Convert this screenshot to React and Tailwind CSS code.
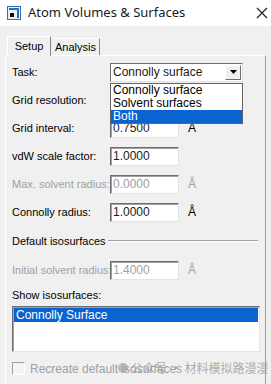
import React from 'react';

const font = { fontFamily: '"Liberation Sans", Arial, sans-serif' };

function Field({ label, value, unit, disabled }) {
  return (
    <div className="flex items-center h-[28px]">
      <div className={`w-[98px] text-[11px] whitespace-nowrap ${disabled ? 'text-[#a0a0a0]' : 'text-black'}`}>{label}</div>
      <div className="w-[69px] h-[19px] bg-white border border-t-[#6d6d6d] border-l-[#6d6d6d] border-b-[#e3e3e3] border-r-[#e3e3e3] shadow-[inset_1px_1px_0_#a0a0a0] flex items-center pl-[2px]">
        <span className={`text-[12px] ${disabled ? 'text-[#a0a0a0]' : 'text-[#1a1a1a]'}`}>{value}</span>
      </div>
      {unit && <span className={`ml-[9px] text-[12px] ${disabled ? 'text-[#a0a0a0]' : 'text-black'}`}>{unit}</span>}
    </div>
  );
}

export default function App() {
  return (
    <div className="w-[271px] h-[384px] bg-[#f0f0f0] overflow-hidden relative" style={font}>
      {/* title bar */}
      <div className="h-[26px] bg-white flex items-center pl-[7px] pr-[3px]">
        <svg width="14" height="14" viewBox="0 0 14 14">
          <rect x="0.5" y="0.5" width="13" height="13" fill="#e8f0f8" stroke="#2f6fb8" />
          <rect x="2" y="2" width="10" height="2" fill="#2f6fb8" />
          <rect x="10" y="2" width="2" height="10" fill="#2f6fb8" />
          <rect x="3" y="7" width="4" height="4" fill="#111" />
        </svg>
        <span className="ml-[7px] text-[13px] text-[#1a1a1a]" style={{ fontFamily: '"Noto Sans", "Liberation Sans", sans-serif' }}>Atom Volumes &amp; Surfaces</span>
        <svg className="ml-auto" width="12" height="12" viewBox="0 0 12 12">
          <path d="M1 1 L11 11 M11 1 L1 11" stroke="#222" strokeWidth="1.2" />
        </svg>
      </div>

      {/* tabs */}
      <div className="flex items-end h-[28px] pl-[7px] mt-[1px]">
        <div className="h-[20px] w-[44px] justify-center bg-[#f0f0f0] border border-b-0 border-t-white border-l-white border-r-[#8a8a8a] text-[11px] flex items-center relative top-[1px] z-10">Setup</div>
        <div className="h-[17px] w-[49px] justify-center border border-b-0 border-t-white border-l-[#e8e8e8] border-r-[#8a8a8a] text-[11px] flex items-center">Analysis</div>
      </div>

      {/* panel */}
      <div className="mx-[5px] h-[340px] border border-t-white border-l-white border-r-[#a0a0a0] border-b-[#a0a0a0] pl-[6px] pr-[5px] pt-[2px] relative">
        {/* Task */}
        <div className="flex items-center h-[28px]">
          <div className="w-[98px] text-[11px]">Task:</div>
          <div className="w-[133px] h-[19px] bg-white border border-t-[#6d6d6d] border-l-[#6d6d6d] border-b-[#e3e3e3] border-r-[#e3e3e3] flex items-center pl-[2px]">
            <span className="text-[12px] text-[#1a1a1a] flex-1">Connolly surface</span>
            <div className="w-[16px] h-[15px] mr-[1px] bg-[#f0f0f0] border border-t-white border-l-white border-b-[#6d6d6d] border-r-[#6d6d6d] flex items-center justify-center">
              <svg width="7" height="4" viewBox="0 0 7 4"><path d="M0 0 H7 L3.5 4 Z" fill="#000" /></svg>
            </div>
          </div>
        </div>
        <Field label="Grid resolution:" value="" />
        <Field label="Grid interval:" value="0.7500" unit="Å" />
        <Field label="vdW scale factor:" value="1.0000" />
        <Field label="Max. solvent radius:" value="0.0000" unit="Å" disabled />
        <Field label="Connolly radius:" value="1.0000" unit="Å" />

        {/* group header */}
        <div className="flex items-center h-[30px]">
          <span className="text-[11px] w-[90px] whitespace-nowrap">Default isosurfaces</span>
          <div className="flex-1 ml-[6px] mr-[2px] h-[2px] border-t border-t-[#a0a0a0] border-b border-b-white" />
        </div>
        <Field label="Initial solvent radius:" value="1.4000" unit="Å" disabled />
        <div className="h-[22px] flex items-center text-[11px]">Show isosurfaces:</div>

        {/* list box */}
        <div className="h-[46px] bg-white border border-t-[#6d6d6d] border-l-[#6d6d6d] border-b-[#e3e3e3] border-r-[#e3e3e3] shadow-[inset_1px_1px_0_#a0a0a0] p-[1px]">
          <div className="h-[14px] bg-[#0a64d0] text-white text-[12px] leading-[14px] pl-[2px]">Connolly Surface</div>
        </div>

        {/* checkbox */}
        <div className="flex items-center mt-[10px] h-[13px]">
          <div className="w-[13px] h-[13px] bg-[#f4f4f4] border border-t-[#a0a0a0] border-l-[#a0a0a0] border-b-white border-r-white" />
          <span className="ml-[5px] text-[12px] text-[#a0a0a0]">Recreate default isosurfaces</span>
        </div>

        {/* open dropdown list */}
        <div className="absolute left-[104px] top-[27px] w-[133px] h-[41px] bg-white border border-[#646464] text-[12px] leading-[13px]">
          <div className="pl-[2px] h-[13px]">Connolly surface</div>
          <div className="pl-[2px] h-[13px]">Solvent surfaces</div>
          <div className="pl-[2px] h-[13px] bg-[#0a64d0] text-white">Both</div>
        </div>
      </div>

      {/* watermark */}
      <div className="absolute left-[118px] top-[359px] flex items-center gap-[3px] text-[12px] leading-[18px] text-[#9a9a9a]/80 whitespace-nowrap" style={{ fontFamily: '"Noto Sans CJK SC", sans-serif' }}>
        <span className="w-[10px] h-[10px] rounded-full bg-[#9a9a9a]/60" />
        <span>公众号 · 材料模拟路漫漫</span>
      </div>
    </div>
  );
}
